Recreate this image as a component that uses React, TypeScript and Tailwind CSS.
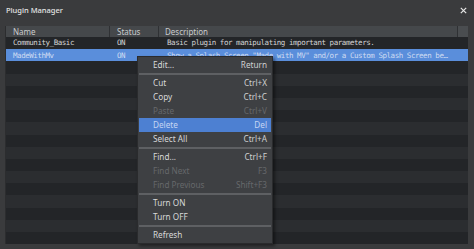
import React from "react";

const mono = { fontFamily: '"DejaVu Sans Mono", "Liberation Mono", monospace' };

type Item =
  | { sep: true }
  | { sep?: false; label: string; key: string; disabled?: boolean; active?: boolean };

const items: Item[] = [
  { label: "Edit...", key: "Return" },
  { sep: true },
  { label: "Cut", key: "Ctrl+X" },
  { label: "Copy", key: "Ctrl+C" },
  { label: "Paste", key: "Ctrl+V", disabled: true },
  { label: "Delete", key: "Del", active: true },
  { label: "Select All", key: "Ctrl+A" },
  { sep: true },
  { label: "Find...", key: "Ctrl+F" },
  { label: "Find Next", key: "F3", disabled: true },
  { label: "Find Previous", key: "Shift+F3", disabled: true },
  { sep: true },
  { label: "Turn ON", key: "" },
  { label: "Turn OFF", key: "" },
  { sep: true },
  { label: "Refresh", key: "" },
];

export default function App() {
  const rows = Array.from({ length: 17 });
  return (
    <div
      className="relative w-[474px] h-[249px] overflow-hidden bg-[#3a3b3d] text-[#d6d6d6]"
      style={{ fontFamily: '"Noto Sans", "DejaVu Sans", sans-serif' }}
    >
      {/* Title bar */}
      <div className="flex h-[21px] items-center justify-between pl-[6px] pr-[7px]">
        <span className="text-[7.5px] font-medium text-[#e4e4e4]">Plugin Manager</span>
        <svg width="7" height="7" viewBox="0 0 7 7">
          <path d="M0.8 0.8 L6.2 6.2 M6.2 0.8 L0.8 6.2" stroke="#e6e6e6" strokeWidth="1.2" />
        </svg>
      </div>

      {/* Table */}
      <div className="ml-[5px] mr-[6px] mt-[5px] h-[218px] overflow-hidden border-l border-[#2c2d2f] bg-[#242629]">
        {/* header */}
        <div className="flex h-[11px] bg-[#45484b] text-[8px] leading-[11px] text-[#c9cbcd]">
          <div className="w-[104px] border-r border-[#2f3134] pl-[7px]">Name</div>
          <div className="w-[49px] border-r border-[#2f3134] pl-[7px]">Status</div>
          <div className="flex-1 border-r border-[#2f3134] pl-[6px]">Description</div>
          <div className="w-[10px] bg-[#4a4d50]" />
        </div>
        {/* body */}
        <div style={mono} className="text-[7.5px] tracking-[-0.45px]">
          {rows.map((_, i) => {
            const selected = i === 1;
            const bg = selected ? "bg-[#5a8edb]" : i % 2 === 0 ? "bg-[#232528]" : "bg-[#2b2d30]";
            const color = selected ? "text-[#cfdcf2]" : "text-[#d4d4d4]";
            let name = "";
            let status = "";
            let desc = "";
            if (i === 0) {
              name = "Community_Basic";
              status = "ON";
              desc = "Basic plugin for manipulating important parameters.";
            } else if (i === 1) {
              name = "MadeWithMv";
              status = "ON";
              desc = 'Show a Splash Screen "Made with MV" and/or a Custom Splash Screen before going to main screen.';
            }
            return (
              <div key={i} className={`flex h-[12.2px] items-center ${bg} ${color}`}>
                <div className="w-[105px] shrink-0 pl-[7px] whitespace-nowrap">{name}</div>
                <div className="w-[50px] shrink-0 pl-[6px] whitespace-nowrap">{status}</div>
                <div className="w-[289px] shrink-0 overflow-hidden text-ellipsis whitespace-nowrap pl-[6px]">
                  {desc}
                </div>
              </div>
            );
          })}
        </div>
      </div>

      {/* Context menu */}
      <div className="absolute left-[137px] top-[56px] w-[136px] border border-[#2a2b2d] bg-[#3e4043] py-[1px] shadow-[2px_2px_3px_rgba(0,0,0,0.45)]">
        {items.map((it, i) =>
          it.sep ? (
            <div key={i} className="flex h-[4px] items-center px-[1px]">
              <div className="h-[1.5px] w-full bg-[#5e6063]" />
            </div>
          ) : (
            <div
              key={i}
              className={`mx-[1px] flex h-[14px] items-center justify-between pl-[14px] pr-[4px] text-[8.2px] ${
                it.active ? "bg-[#4d80d2] text-[#c5d6f2]" : it.disabled ? "text-[#66686b]" : "text-[#d8d9da]"
              }`}
            >
              <span>{it.label}</span>
              <span className={it.active ? "text-[#c5d6f2]" : it.disabled ? "text-[#66686b]" : "text-[#cfd0d1]"}>
                {it.key}
              </span>
            </div>
          )
        )}
      </div>
    </div>
  );
}
